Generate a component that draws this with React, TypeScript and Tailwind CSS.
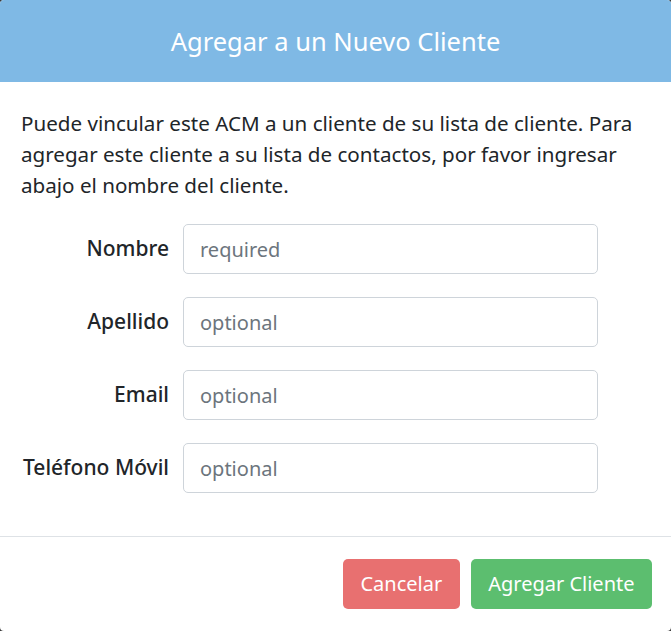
import { useState } from 'react';

const fields = [
  { label: 'Nombre', placeholder: 'required' },
  { label: 'Apellido', placeholder: 'optional' },
  { label: 'Email', placeholder: 'optional' },
  { label: 'Teléfono Móvil', placeholder: 'optional' },
];

export default function App() {
  const [values, setValues] = useState<string[]>(['', '', '', '']);

  return (
    <div className="min-h-screen bg-[#3a3a3a] font-['Noto_Sans',sans-serif]">
      <div className="w-[671px] h-[631px] bg-white rounded-[4px] overflow-hidden flex flex-col">
        {/* Header */}
        <div className="h-[82px] bg-[#7fb9e5] flex items-center justify-center">
          <h2 className="text-[25.5px] text-white">Agregar a un Nuevo Cliente</h2>
        </div>

        {/* Body */}
        <div className="px-[21px] pt-[26px] pb-[43px]">
          <p className="text-[20.6px] leading-[31px] text-[#212529] mb-[23px] whitespace-nowrap">
            Puede vincular este ACM a un cliente de su lista de cliente. Para
            <br />
            agregar este cliente a su lista de contactos, por favor ingresar
            <br />
            abajo el nombre del cliente.
          </p>
          <div className="flex flex-col gap-[23px]">
            {fields.map((f, i) => (
              <div key={f.label} className="flex items-center">
                <label className="w-[162px] text-right pr-[14px] text-[21px] font-medium text-[#212529] whitespace-nowrap">
                  {f.label}
                </label>
                <input
                  value={values[i]}
                  onChange={(e) => {
                    const next = [...values];
                    next[i] = e.target.value;
                    setValues(next);
                  }}
                  placeholder={f.placeholder}
                  className="w-[415px] h-[50px] px-[16px] border border-[#ced4da] rounded-[5px] text-[20px] text-[#495057] placeholder:text-[#6c757d] focus:outline-none"
                />
              </div>
            ))}
          </div>
        </div>

        {/* Footer */}
        <div className="border-t border-[#dee2e6] flex-1 flex items-center justify-end gap-[11px] px-[19px]">
          <button className="h-[50px] px-[17.5px] rounded-[5px] bg-[#e87070] text-white text-[20px]">
            Cancelar
          </button>
          <button className="h-[50px] px-[17.5px] rounded-[5px] bg-[#5cbe6f] text-white text-[20px]">
            Agregar Cliente
          </button>
        </div>
      </div>
    </div>
  );
}
